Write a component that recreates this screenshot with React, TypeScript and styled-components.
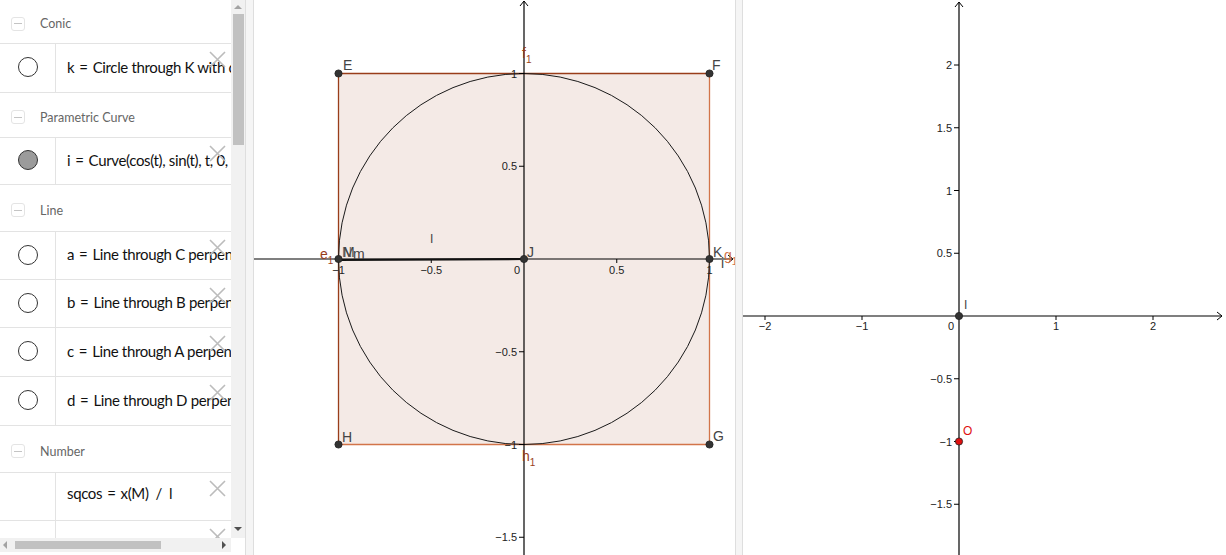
import React from "react";
import styled, { createGlobalStyle } from "styled-components";

const GlobalStyle = createGlobalStyle`
  html, body {
    margin: 0;
    padding: 0;
    background: #fff;
  }
  body {
    width: 1226px;
    height: 555px;
    overflow: hidden;
    font-family: "Lato", "Liberation Sans", sans-serif;
  }
`;

const Shell = styled.div`
  display: flex;
  width: 1226px;
  height: 555px;
`;

/* ---------- algebra view ---------- */

const AlgebraPane = styled.div`
  display: grid;
  grid-template-columns: 231px 14px;
  grid-template-rows: 538px 14px;
  width: 245px;
  flex-shrink: 0;
`;

const AlgebraList = styled.div`
  overflow: hidden;
  background: #fff;
`;

const GroupHeader = styled.div<{ $h: number }>`
  height: ${(p) => p.$h}px;
  display: flex;
  align-items: center;
  gap: 15px;
  padding: 4px 0 0 11px;
  box-sizing: border-box;
  border-bottom: 1px solid #e3e3e3;
  font-size: 12.5px;
  color: #666;
`;

const Toggle = styled.span`
  width: 14px;
  height: 14px;
  box-sizing: border-box;
  border: 1px solid #e4e4e4;
  border-radius: 3px;
  display: flex;
  align-items: center;
  justify-content: center;
  &::before {
    content: "";
    width: 8px;
    height: 1px;
    background: #c4c4c4;
  }
`;

const ItemRow = styled.div<{ $h: number }>`
  position: relative;
  height: ${(p) => p.$h}px;
  display: flex;
  box-sizing: border-box;
  border-bottom: 1px solid #e3e3e3;
`;

const MarkerCell = styled.div`
  width: 56px;
  flex-shrink: 0;
  border-right: 1px solid #e3e3e3;
  display: flex;
  align-items: center;
  justify-content: center;
  padding-bottom: 2px;
  box-sizing: border-box;
`;

const Marker = styled.span<{ $filled?: boolean }>`
  width: 20px;
  height: 20px;
  box-sizing: border-box;
  border-radius: 50%;
  border: 1.4px solid #333;
  background: ${(p) => (p.$filled ? "#9b9b9b" : "#fff")};
`;

const Formula = styled.div<{ $lift: number }>`
  flex: 1;
  min-width: 0;
  padding: 0 0 ${(p) => p.$lift}px 11px;
  display: flex;
  align-items: center;
  white-space: pre;
  overflow: hidden;
  font-size: 15px;
  letter-spacing: -0.35px;
  color: #111;
`;

const Eq = styled.span`
  margin: 0 5px;
`;

const DeleteX = styled.svg`
  position: absolute;
  right: 5px;
  top: 7px;
  width: 17px;
  height: 17px;
`;

const VScroll = styled.div`
  background: #f1f1f1;
  display: flex;
  flex-direction: column;
  align-items: center;
`;

const HScroll = styled.div`
  background: #f1f1f1;
  display: flex;
  align-items: center;
`;

const Corner = styled.div`
  background: #fff;
`;

const ArrowUp = styled.span<{ $dark?: boolean }>`
  margin-top: 5px;
  width: 0;
  height: 0;
  border-left: 4px solid transparent;
  border-right: 4px solid transparent;
  border-bottom: 4px solid ${(p) => (p.$dark ? "#505050" : "#a3a3a3")};
`;

const ArrowDown = styled.span<{ $dark?: boolean }>`
  margin-top: auto;
  margin-bottom: 7px;
  width: 0;
  height: 0;
  border-left: 4px solid transparent;
  border-right: 4px solid transparent;
  border-top: 4px solid ${(p) => (p.$dark ? "#505050" : "#a3a3a3")};
`;

const ArrowLeft = styled.span<{ $dark?: boolean }>`
  margin-left: 3px;
  width: 0;
  height: 0;
  border-top: 4px solid transparent;
  border-bottom: 4px solid transparent;
  border-right: 4px solid ${(p) => (p.$dark ? "#505050" : "#a3a3a3")};
`;

const ArrowRight = styled.span<{ $dark?: boolean }>`
  margin-left: auto;
  margin-right: 5px;
  width: 0;
  height: 0;
  border-top: 4px solid transparent;
  border-bottom: 4px solid transparent;
  border-left: 4px solid ${(p) => (p.$dark ? "#505050" : "#a3a3a3")};
`;

const VThumb = styled.div`
  margin-top: 5px;
  width: 11px;
  height: 131px;
  background: #c1c1c1;
`;

const HThumb = styled.div`
  margin-left: 8px;
  width: 146px;
  height: 8px;
  background: #c1c1c1;
`;

/* ---------- splitters & graphics ---------- */

const Splitter = styled.div<{ $w: number }>`
  width: ${(p) => p.$w}px;
  flex-shrink: 0;
  box-sizing: border-box;
  background: #f5f5f5;
  border-left: 1px solid #dedede;
  border-right: 1px solid #dedede;
`;

const Graphics = styled.svg<{ $w: number }>`
  display: block;
  width: ${(p) => p.$w}px;
  height: 555px;
  flex-shrink: 0;
  background: #fff;
  font-family: "Liberation Sans", Arial, sans-serif;
`;

type Entry =
  | { kind: "group"; label: string; h: number }
  | { kind: "item"; name: string; def: string; h: number; lift?: number; marker?: "open" | "filled" };

const entries: Entry[] = [
  { kind: "group", label: "Conic", h: 44 },
  { kind: "item", name: "k", def: "Circle through K with center J", h: 49, marker: "open" },
  { kind: "group", label: "Parametric Curve", h: 45 },
  { kind: "item", name: "i", def: "Curve(cos(t), sin(t), t, 0, 2π)", h: 47, marker: "filled" },
  { kind: "group", label: "Line", h: 47 },
  { kind: "item", name: "a", def: "Line through C perpendicular to b", h: 48, marker: "open" },
  { kind: "item", name: "b", def: "Line through B perpendicular to c", h: 48, marker: "open" },
  { kind: "item", name: "c", def: "Line through A perpendicular to d", h: 49, marker: "open" },
  { kind: "item", name: "d", def: "Line through D perpendicular to a", h: 49, marker: "open" },
  { kind: "group", label: "Number", h: 47 },
  { kind: "item", name: "sqcos", def: "x(M)  /  l", h: 48, lift: 8 },
  { kind: "item", name: "", def: "", h: 48 },
];

const Cross = () => (
  <DeleteX viewBox="0 0 17 17">
    <path d="M1 1 L16 16 M16 1 L1 16" stroke="#bcbcbc" strokeWidth="1.6" fill="none" />
  </DeleteX>
);

const AlgebraView = () => (
  <AlgebraPane>
    <AlgebraList>
      {entries.map((e, i) =>
        e.kind === "group" ? (
          <GroupHeader key={i} $h={e.h}>
            <Toggle />
            {e.label}
          </GroupHeader>
        ) : (
          <ItemRow key={i} $h={e.h}>
            <MarkerCell>{e.marker && <Marker $filled={e.marker === "filled"} />}</MarkerCell>
            <Formula $lift={e.lift ?? 3}>
              {e.name && (
                <>
                  {e.name}
                  <Eq>=</Eq>
                  {e.def}
                </>
              )}
            </Formula>
            <Cross />
          </ItemRow>
        )
      )}
    </AlgebraList>
    <VScroll>
      <ArrowUp />
      <VThumb />
      <ArrowDown $dark />
    </VScroll>
    <HScroll>
      <ArrowLeft />
      <HThumb />
      <ArrowRight $dark />
    </HScroll>
    <Corner />
  </AlgebraPane>
);

const AX = "#000";
const TICK_TEXT = "#222";
const LABEL = "#444";
const BROWN = "#993d1a";
const ORANGE = "#d27449";

const Dot = ({ x, y, fill = "#333" }: { x: number; y: number; fill?: string }) => (
  <circle cx={x} cy={y} r={3.6} fill={fill} stroke="#222" strokeWidth={0.8} />
);

const SubLabel = ({ x, y, main, sub, color }: { x: number; y: number; main: string; sub: string; color: string }) => (
  <text x={x} y={y} fill={color} fontSize={14}>
    {main}
    <tspan fontSize={10} dy={5}>
      {sub}
    </tspan>
  </text>
);

/* Graphics 1: origin (270,259), 185.5px per unit */
const GraphicsOne = () => {
  const ox = 270;
  const oy = 259;
  const s = 185.5;
  const X = (v: number) => ox + v * s;
  const Y = (v: number) => oy - v * s;
  const xTicks: [number, string][] = [
    [-1, "−1"],
    [-0.5, "−0.5"],
    [0.5, "0.5"],
    [1, "1"],
  ];
  const yTicks: [number, string][] = [
    [1, "1"],
    [0.5, "0.5"],
    [-0.5, "−0.5"],
    [-1, "−1"],
    [-1.5, "−1.5"],
  ];
  return (
    <Graphics $w={481} viewBox="0 0 481 555">
      <rect x={X(-1)} y={Y(1)} width={2 * s} height={2 * s} fill="#f4eae6" />
      <line x1={X(1)} y1={Y(1)} x2={X(1)} y2={Y(-1)} stroke={ORANGE} strokeWidth={1.3} />
      <line x1={X(-1)} y1={Y(-1)} x2={X(1)} y2={Y(-1)} stroke={ORANGE} strokeWidth={1.3} />
      <line x1={X(-1)} y1={Y(1)} x2={X(1)} y2={Y(1)} stroke={BROWN} strokeWidth={1.3} />
      <line x1={X(-1)} y1={Y(1)} x2={X(-1)} y2={Y(-1)} stroke={BROWN} strokeWidth={1.3} />
      <circle cx={ox} cy={oy} r={s} fill="none" stroke="#1a1a1a" strokeWidth={1} />

      {/* axes */}
      <line x1={0} y1={oy} x2={479} y2={oy} stroke={AX} strokeWidth={1.2} />
      <path d={`M474 ${oy - 4} L479 ${oy} L474 ${oy + 4}`} stroke={AX} fill="none" strokeWidth={1} />
      <line x1={ox} y1={555} x2={ox} y2={1} stroke={AX} strokeWidth={1.2} />
      <path d={`M${ox - 4} 6 L${ox} 1 L${ox + 4} 6`} stroke={AX} fill="none" strokeWidth={1} />

      {xTicks.map(([v, t]) => (
        <g key={t}>
          <line x1={X(v)} y1={oy} x2={X(v)} y2={oy + 4} stroke={AX} />
          <text x={X(v)} y={oy + 15} fontSize={11} fill={TICK_TEXT} textAnchor="middle">
            {t}
          </text>
        </g>
      ))}
      <text x={ox - 4} y={oy + 15} fontSize={11} fill={TICK_TEXT} textAnchor="end">
        0
      </text>
      {yTicks.map(([v, t]) => (
        <g key={t}>
          <line x1={ox - 5} y1={Y(v)} x2={ox} y2={Y(v)} stroke={AX} />
          <text x={ox - 7} y={Y(v) + 4} fontSize={11} fill={TICK_TEXT} textAnchor="end">
            {t}
          </text>
        </g>
      ))}

      {/* segment m */}
      <line x1={X(-1)} y1={oy + 1} x2={ox} y2={oy} stroke="#111" strokeWidth={2.2} />

      <Dot x={X(-1)} y={Y(1)} />
      <Dot x={X(1)} y={Y(1)} />
      <Dot x={X(1)} y={Y(-1)} />
      <Dot x={X(-1)} y={Y(-1)} />
      <Dot x={X(-1)} y={oy} />
      <Dot x={ox} y={oy} />
      <Dot x={X(1)} y={oy} />

      <g fontSize={14} fill={LABEL}>
        <text x={89} y={70}>E</text>
        <text x={458} y={70}>F</text>
        <text x={459} y={441}>G</text>
        <text x={88} y={442}>H</text>
        <text x={88} y={257} fill="#666">N</text>
        <text x={89} y={257}>M</text>
        <text x={99} y={259}>m</text>
        <text x={273} y={257}>J</text>
        <text x={459} y={257}>K</text>
        <text x={467} y={268}>i</text>
      </g>
      <text x={176} y={243} fontSize={12} fill={LABEL}>
        I
      </text>
      <SubLabel x={268} y={58} main="f" sub="1" color={BROWN} />
      <SubLabel x={268} y={461} main="h" sub="1" color={BROWN} />
      <SubLabel x={66} y={259} main="e" sub="1" color={BROWN} />
      <SubLabel x={470} y={260} main="g" sub="1" color={ORANGE} />
    </Graphics>
  );
};

/* Graphics 2: origin (216,316), 97px per unit in x, 125.5px in y */
const GraphicsTwo = () => {
  const ox = 216;
  const oy = 316;
  const sx = 97;
  const sy = 125.5;
  const X = (v: number) => ox + v * sx;
  const Y = (v: number) => oy - v * sy;
  const xTicks: [number, string][] = [
    [-2, "−2"],
    [-1, "−1"],
    [1, "1"],
    [2, "2"],
  ];
  const yTicks: [number, string][] = [
    [2, "2"],
    [1.5, "1.5"],
    [1, "1"],
    [0.5, "0.5"],
    [-0.5, "−0.5"],
    [-1, "−1"],
    [-1.5, "−1.5"],
  ];
  return (
    <Graphics $w={483} viewBox="0 0 483 555">
      <line x1={0} y1={oy} x2={479} y2={oy} stroke={AX} strokeWidth={1.2} />
      <path d={`M474 ${oy - 4} L479 ${oy} L474 ${oy + 4}`} stroke={AX} fill="none" strokeWidth={1} />
      <line x1={ox} y1={555} x2={ox} y2={2} stroke={AX} strokeWidth={1.2} />
      <path d={`M${ox - 4} 7 L${ox} 2 L${ox + 4} 7`} stroke={AX} fill="none" strokeWidth={1} />

      {xTicks.map(([v, t]) => (
        <g key={t}>
          <line x1={X(v)} y1={oy} x2={X(v)} y2={oy + 4} stroke={AX} />
          <text x={X(v)} y={oy + 14} fontSize={11} fill={TICK_TEXT} textAnchor="middle">
            {t}
          </text>
        </g>
      ))}
      <text x={ox - 5} y={oy + 14} fontSize={11} fill={TICK_TEXT} textAnchor="end">
        0
      </text>
      {yTicks.map(([v, t]) => (
        <g key={t}>
          <line x1={ox - 5} y1={Y(v)} x2={ox} y2={Y(v)} stroke={AX} />
          <text x={ox - 7} y={Y(v) + 4} fontSize={11} fill={TICK_TEXT} textAnchor="end">
            {t}
          </text>
        </g>
      ))}

      <Dot x={ox} y={oy} />
      <Dot x={ox} y={Y(-1)} fill="#e01010" />
      <text x={221} y={309} fontSize={12} fill={LABEL}>
        I
      </text>
      <text x={220} y={435} fontSize={12} fill="#e01010">
        O
      </text>
    </Graphics>
  );
};

export default function App() {
  return (
    <>
      <GlobalStyle />
      <Shell>
        <AlgebraView />
        <Splitter $w={9} />
        <GraphicsOne />
        <Splitter $w={8} />
        <GraphicsTwo />
      </Shell>
    </>
  );
}
